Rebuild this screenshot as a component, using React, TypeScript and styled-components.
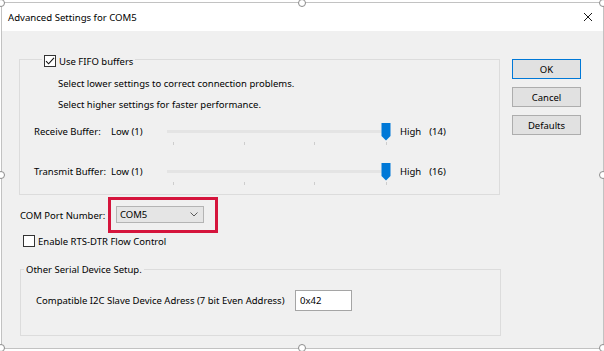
import React from "react";
import styled, { createGlobalStyle } from "styled-components";

const GlobalStyle = createGlobalStyle`
  html, body {
    margin: 0;
    padding: 0;
    background: #ffffff;
  }
  body {
    font-family: "Noto Sans", "Liberation Sans", sans-serif;
    font-size: 9.5px;
    color: #000;
  }
  * {
    box-sizing: border-box;
  }
`;

const Canvas = styled.div`
  position: relative;
  width: 604px;
  height: 351px;
  overflow: hidden;
  padding: 2px 0 0 1px;
`;

const Window = styled.div`
  width: 603px;
  height: 347px;
  border: 1px solid #c2c2c2;
  background: #f0f0f0;
  display: flex;
  flex-direction: column;
`;

const TitleBar = styled.div`
  height: 28px;
  flex: none;
  background: #ffffff;
  display: flex;
  align-items: center;
  justify-content: space-between;
  padding: 0 10px 0 6px;
`;

const Title = styled.span`
  font-size: 9.6px;
`;

const Body = styled.div`
  display: flex;
  align-items: flex-start;
  padding: 28px 0 0 17px;
`;

const Main = styled.div`
  width: 482px;
  display: flex;
  flex-direction: column;
`;

const GroupBox = styled.div<{ $inset?: number }>`
  position: relative;
  width: 481px;
  margin-left: ${p => p.$inset ?? 0}px;
  border: 1px solid #dcdcdc;
`;

const Legend = styled.div<{ $left: number; $top: number }>`
  position: absolute;
  left: ${p => p.$left}px;
  top: ${p => p.$top}px;
  height: 14px;
  padding: 0 2px;
  background: #f0f0f0;
  display: flex;
  align-items: center;
  gap: 3px;
`;

const Description = styled.div`
  padding: 13px 0 0 38px;
  line-height: 21px;
`;

const SliderRow = styled.div<{ $gap: number }>`
  display: flex;
  align-items: center;
  height: 30px;
  margin-top: ${p => p.$gap}px;
  padding-left: 14px;
`;

const RowLabel = styled.span<{ $width: number }>`
  width: ${p => p.$width}px;
  flex: none;
  white-space: nowrap;
`;

const HighLabel = styled.span`
  margin-left: 7px;
`;

const HighValue = styled.span`
  margin-left: 8px;
`;

const SliderBlock = styled.div`
  padding-bottom: 8px;
`;

const CheckBox = styled.span`
  width: 12px;
  height: 12px;
  flex: none;
  border: 1px solid #333333;
  background: #ffffff;
  display: flex;
  align-items: center;
  justify-content: center;
`;

const PortRow = styled.div`
  display: flex;
  align-items: center;
  margin-top: 2px;
  padding-left: 1px;
`;

const Highlight = styled.div`
  border: 3px solid #d5143c;
  padding: 6px 11px 7px 5px;
`;

const Select = styled.div`
  width: 88px;
  height: 17px;
  background: #e5e5e5;
  border: 1px solid #b4b4b4;
  display: flex;
  align-items: center;
  justify-content: space-between;
  padding: 0 5px 0 3px;
`;

const CheckRow = styled.label`
  display: flex;
  align-items: center;
  gap: 3px;
  margin: 2px 0 0 4px;
  height: 12px;
`;

const AddressRow = styled.div`
  display: flex;
  align-items: center;
  padding: 20px 0 24px 15px;
`;

const TextInput = styled.div`
  width: 57px;
  height: 21px;
  border: 1px solid #a5a5a5;
  background: #ffffff;
  display: flex;
  align-items: center;
  padding-left: 4px;
`;

const ButtonColumn = styled.div`
  display: flex;
  flex-direction: column;
  gap: 8px;
  margin-left: 11px;
`;

const DialogButton = styled.div<{ $default?: boolean }>`
  width: 69px;
  height: 20px;
  background: #e1e1e1;
  border: 1px solid ${p => (p.$default ? "#0078d7" : "#adadad")};
  display: flex;
  align-items: center;
  justify-content: center;
`;

const Handle = styled.span<{ $x: number; $y: number }>`
  position: absolute;
  left: ${p => p.$x - 4}px;
  top: ${p => p.$y - 4}px;
  width: 8px;
  height: 8px;
  border-radius: 50%;
  border: 1px solid #8c8c8c;
  background: #ffffff;
`;

const CloseIcon = () => (
  <svg width="10" height="10" viewBox="0 0 10 10">
    <path d="M1 1L9 9M9 1L1 9" stroke="#1a1a1a" strokeWidth="1" fill="none" />
  </svg>
);

const Check = () => (
  <svg width="10" height="10" viewBox="0 0 10 10">
    <path d="M1 5.2L3.6 7.8L9 1.8" stroke="#111" strokeWidth="1.1" fill="none" />
  </svg>
);

const Chevron = () => (
  <svg width="8" height="5" viewBox="0 0 8 5">
    <path d="M0.5 0.5L4 4L7.5 0.5" stroke="#5a5a5a" strokeWidth="1" fill="none" />
  </svg>
);

const ticks = [6, 77, 147, 219];

const Slider = () => (
  <svg width="226" height="30" viewBox="0 0 226 30">
    <rect x="0" y="14" width="222" height="3" fill="#e4e4e4" />
    {ticks.map(x => (
      <rect key={x} x={x} y={26} width={1} height={3} fill="#cdcdcd" />
    ))}
    <path d="M214.5 7H223.5V20L219 24.5L214.5 20Z" fill="#0078d7" />
  </svg>
);

const buffers = [
  { label: "Receive Buffer:", high: 14, gap: 1 },
  { label: "Transmit Buffer:", high: 16, gap: 10 },
];

const handles = [
  [1, 2.5], [302, 2.5], [603, 2.5],
  [1, 175], [603, 175],
  [1, 348], [302, 348], [603, 348],
];

export default function App() {
  return (
    <>
      <GlobalStyle />
      <Canvas>
        <Window>
          <TitleBar>
            <Title>Advanced Settings for COM5</Title>
            <CloseIcon />
          </TitleBar>
          <Body>
            <Main>
              <GroupBox>
                <Legend $left={22} $top={-6}>
                  <CheckBox><Check /></CheckBox>
                  <span>Use FIFO buffers</span>
                </Legend>
                <Description>
                  <div>Select lower settings to correct connection problems.</div>
                  <div>Select higher settings for faster performance.</div>
                </Description>
                <SliderBlock>
                  {buffers.map(b => (
                    <SliderRow key={b.label} $gap={b.gap}>
                      <RowLabel $width={77}>{b.label}</RowLabel>
                      <RowLabel $width={56}>Low (1)</RowLabel>
                      <Slider />
                      <HighLabel>High</HighLabel>
                      <HighValue>({b.high})</HighValue>
                    </SliderRow>
                  ))}
                </SliderBlock>
              </GroupBox>

              <PortRow>
                <RowLabel $width={88}>COM Port Number:</RowLabel>
                <Highlight>
                  <Select>
                    <span>COM5</span>
                    <Chevron />
                  </Select>
                </Highlight>
              </PortRow>

              <CheckRow>
                <CheckBox />
                <span>Enable RTS-DTR Flow Control</span>
              </CheckRow>

              <GroupBox $inset={1} style={{ marginTop: 22 }}>
                <Legend $left={3} $top={-8}>
                  <span>Other Serial Device Setup.</span>
                </Legend>
                <AddressRow>
                  <RowLabel $width={259}>Compatible I2C Slave Device Adress (7 bit Even Address)</RowLabel>
                  <TextInput>0x42</TextInput>
                </AddressRow>
              </GroupBox>
            </Main>

            <ButtonColumn>
              <DialogButton $default>OK</DialogButton>
              <DialogButton>Cancel</DialogButton>
              <DialogButton>Defaults</DialogButton>
            </ButtonColumn>
          </Body>
        </Window>
        {handles.map(([x, y]) => (
          <Handle key={`${x}-${y}`} $x={x} $y={y} />
        ))}
      </Canvas>
    </>
  );
}
